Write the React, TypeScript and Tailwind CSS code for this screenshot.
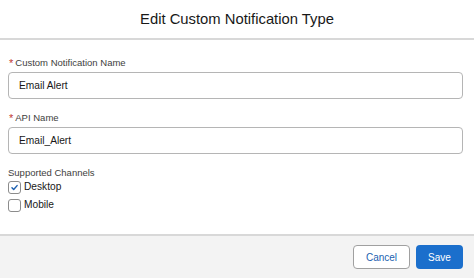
import React from "react";

export default function App() {
  return (
    <div className="w-[474px] h-[278px] bg-white flex flex-col overflow-hidden" style={{ fontFamily: "'Liberation Sans', Arial, sans-serif" }}>
      <div className="h-[40px] flex items-center justify-center border-b-2 border-[#d8d8d8] text-[14.8px] text-[#181818]">
        Edit Custom Notification Type
      </div>
      <div className="flex-1 pl-2 pr-[11px] pt-[17px]">
        <div className="text-[9.5px] text-[#3e3e3c] leading-[12px] flex items-center">
          <span className="text-[#c23934] text-[11px] mr-[2px] ml-[1px] leading-[12px]">*</span>Custom Notification Name
        </div>
        <div className="mt-[3px] h-[27px] border border-[#b5b5b5] rounded-[4px] flex items-center px-[10px] text-[10.2px] text-[#181818]">
          Email Alert
        </div>
        <div className="mt-[13px] text-[9.5px] text-[#3e3e3c] leading-[12px] flex items-center">
          <span className="text-[#c23934] text-[11px] mr-[2px] ml-[1px] leading-[12px]">*</span>API Name
        </div>
        <div className="mt-[3px] h-[27px] border border-[#b5b5b5] rounded-[4px] flex items-center px-[10px] text-[10.2px] text-[#181818]">
          Email_Alert
        </div>
        <div className="mt-[13px] text-[9.5px] text-[#3e3e3c] leading-[12px]">Supported Channels</div>
        <div className="mt-[1px] h-[14px] flex items-center gap-[3px] text-[10.2px] text-[#181818]">
          <div className="w-[13px] h-[13px] border border-[#8c8c8c] rounded-[3px] flex items-center justify-center bg-white">
            <svg width="9" height="9" viewBox="0 0 10 10">
              <path d="M2.2 5.4 L4.1 7.3 L7.9 2.9" stroke="#1b5fb0" strokeWidth="1.6" fill="none" strokeLinecap="round" strokeLinejoin="round" />
            </svg>
          </div>
          Desktop
        </div>
        <div className="mt-[4px] h-[14px] flex items-center gap-[3px] text-[10.2px] text-[#181818]">
          <div className="w-[13px] h-[13px] border border-[#8c8c8c] rounded-[3px] bg-white" />
          Mobile
        </div>
      </div>
      <div className="h-[44px] bg-[#f3f3f3] border-t-2 border-[#d8d8d8] flex items-center justify-end gap-[6px] pr-[11px]">
        <button className="h-[24px] w-[57px] rounded-[4px] border border-[#a0a0a0] bg-white text-[10px] text-[#1b5fb0]">Cancel</button>
        <button className="h-[24px] w-[47px] rounded-[4px] bg-[#1b6fcc] text-[10px] text-white">Save</button>
      </div>
    </div>
  );
}
